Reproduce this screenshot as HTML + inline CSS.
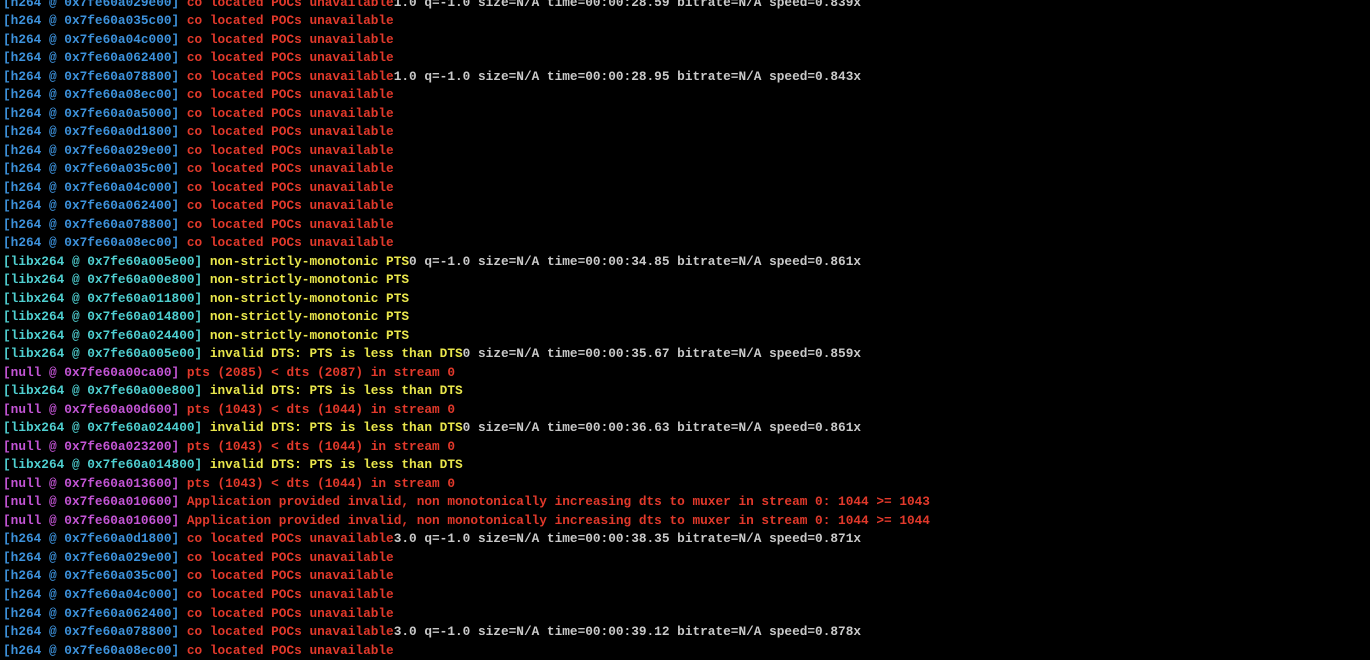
<!DOCTYPE html>
<html><head><meta charset="utf-8"><style>
html,body{margin:0;padding:0;background:#000;width:1370px;height:660px;overflow:hidden}
pre{margin:0;position:absolute;left:3px;top:-6.5px;font-family:"Liberation Mono",monospace;font-size:12.78px;line-height:18.51px;color:#c9c9c9;white-space:pre;font-weight:bold;letter-spacing:0}
.b{color:#3d92dc}.r{color:#e2392b}.c{color:#4fcfd0}.y{color:#e9e64c}.m{color:#c455d6}
</style></head><body><pre><span class="b">[h264 @ 0x7fe60a029e00]</span> <span class="r">co located POCs unavailable</span>1.0 q=-1.0 size=N/A time=00:00:28.59 bitrate=N/A speed=0.839x
<span class="b">[h264 @ 0x7fe60a035c00]</span> <span class="r">co located POCs unavailable</span>
<span class="b">[h264 @ 0x7fe60a04c000]</span> <span class="r">co located POCs unavailable</span>
<span class="b">[h264 @ 0x7fe60a062400]</span> <span class="r">co located POCs unavailable</span>
<span class="b">[h264 @ 0x7fe60a078800]</span> <span class="r">co located POCs unavailable</span>1.0 q=-1.0 size=N/A time=00:00:28.95 bitrate=N/A speed=0.843x
<span class="b">[h264 @ 0x7fe60a08ec00]</span> <span class="r">co located POCs unavailable</span>
<span class="b">[h264 @ 0x7fe60a0a5000]</span> <span class="r">co located POCs unavailable</span>
<span class="b">[h264 @ 0x7fe60a0d1800]</span> <span class="r">co located POCs unavailable</span>
<span class="b">[h264 @ 0x7fe60a029e00]</span> <span class="r">co located POCs unavailable</span>
<span class="b">[h264 @ 0x7fe60a035c00]</span> <span class="r">co located POCs unavailable</span>
<span class="b">[h264 @ 0x7fe60a04c000]</span> <span class="r">co located POCs unavailable</span>
<span class="b">[h264 @ 0x7fe60a062400]</span> <span class="r">co located POCs unavailable</span>
<span class="b">[h264 @ 0x7fe60a078800]</span> <span class="r">co located POCs unavailable</span>
<span class="b">[h264 @ 0x7fe60a08ec00]</span> <span class="r">co located POCs unavailable</span>
<span class="c">[libx264 @ 0x7fe60a005e00]</span> <span class="y">non-strictly-monotonic PTS</span>0 q=-1.0 size=N/A time=00:00:34.85 bitrate=N/A speed=0.861x
<span class="c">[libx264 @ 0x7fe60a00e800]</span> <span class="y">non-strictly-monotonic PTS</span>
<span class="c">[libx264 @ 0x7fe60a011800]</span> <span class="y">non-strictly-monotonic PTS</span>
<span class="c">[libx264 @ 0x7fe60a014800]</span> <span class="y">non-strictly-monotonic PTS</span>
<span class="c">[libx264 @ 0x7fe60a024400]</span> <span class="y">non-strictly-monotonic PTS</span>
<span class="c">[libx264 @ 0x7fe60a005e00]</span> <span class="y">invalid DTS: PTS is less than DTS</span>0 size=N/A time=00:00:35.67 bitrate=N/A speed=0.859x
<span class="m">[null @ 0x7fe60a00ca00]</span> <span class="r">pts (2085) &lt; dts (2087) in stream 0</span>
<span class="c">[libx264 @ 0x7fe60a00e800]</span> <span class="y">invalid DTS: PTS is less than DTS</span>
<span class="m">[null @ 0x7fe60a00d600]</span> <span class="r">pts (1043) &lt; dts (1044) in stream 0</span>
<span class="c">[libx264 @ 0x7fe60a024400]</span> <span class="y">invalid DTS: PTS is less than DTS</span>0 size=N/A time=00:00:36.63 bitrate=N/A speed=0.861x
<span class="m">[null @ 0x7fe60a023200]</span> <span class="r">pts (1043) &lt; dts (1044) in stream 0</span>
<span class="c">[libx264 @ 0x7fe60a014800]</span> <span class="y">invalid DTS: PTS is less than DTS</span>
<span class="m">[null @ 0x7fe60a013600]</span> <span class="r">pts (1043) &lt; dts (1044) in stream 0</span>
<span class="m">[null @ 0x7fe60a010600]</span> <span class="r">Application provided invalid, non monotonically increasing dts to muxer in stream 0: 1044 &gt;= 1043</span>
<span class="m">[null @ 0x7fe60a010600]</span> <span class="r">Application provided invalid, non monotonically increasing dts to muxer in stream 0: 1044 &gt;= 1044</span>
<span class="b">[h264 @ 0x7fe60a0d1800]</span> <span class="r">co located POCs unavailable</span>3.0 q=-1.0 size=N/A time=00:00:38.35 bitrate=N/A speed=0.871x
<span class="b">[h264 @ 0x7fe60a029e00]</span> <span class="r">co located POCs unavailable</span>
<span class="b">[h264 @ 0x7fe60a035c00]</span> <span class="r">co located POCs unavailable</span>
<span class="b">[h264 @ 0x7fe60a04c000]</span> <span class="r">co located POCs unavailable</span>
<span class="b">[h264 @ 0x7fe60a062400]</span> <span class="r">co located POCs unavailable</span>
<span class="b">[h264 @ 0x7fe60a078800]</span> <span class="r">co located POCs unavailable</span>3.0 q=-1.0 size=N/A time=00:00:39.12 bitrate=N/A speed=0.878x
<span class="b">[h264 @ 0x7fe60a08ec00]</span> <span class="r">co located POCs unavailable</span>
</pre></body></html>
